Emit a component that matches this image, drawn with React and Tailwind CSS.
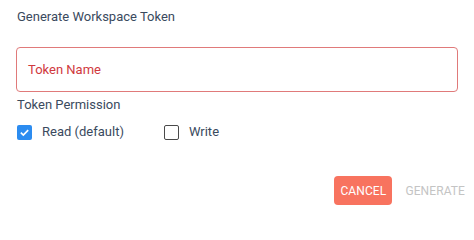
export default function App() {
  return (
    <div className="w-[474px] h-[209px] bg-white font-['Roboto',sans-serif] text-[#3a4a5e] flex flex-col">
      <div className="px-[17px] pt-[8px] text-[13px] leading-[18px]">Generate Workspace Token</div>
      <div className="mx-[16px] mt-[21px] h-[45px] border border-[#e07a7a] rounded-[4px] flex items-center px-[11px]">
        <span className="text-[13px] text-[#d0393e]">Token Name</span>
      </div>
      <div className="px-[17px] mt-[4px] text-[13px] leading-[18px]">Token Permission</div>
      <div className="px-[17px] mt-[9px] flex items-center text-[13px] h-[18px]">
        <span className="w-[15px] h-[15px] rounded-[2px] bg-[#2c8cf0] flex items-center justify-center">
          <svg width="11" height="11" viewBox="0 0 12 12" fill="none">
            <path d="M2 6.2l2.7 2.6L10 3.4" stroke="white" strokeWidth="1.8" />
          </svg>
        </span>
        <span className="ml-[10px]">Read (default)</span>
        <span className="ml-[40px] w-[15px] h-[15px] rounded-[2px] border-[1.5px] border-[#4a4a4a]" />
        <span className="ml-[10px]">Write</span>
      </div>
      <div className="mt-auto mb-[4px] flex justify-end items-center pr-[9px]">
        <button className="h-[29px] w-[58px] rounded-[4px] bg-[#f8735f] text-white text-[12px] tracking-[0.1px]">CANCEL</button>
        <button className="ml-[13px] h-[29px] text-[#c4c4c4] text-[12px] tracking-[0.1px]">GENERATE</button>
      </div>
    </div>
  );
}
